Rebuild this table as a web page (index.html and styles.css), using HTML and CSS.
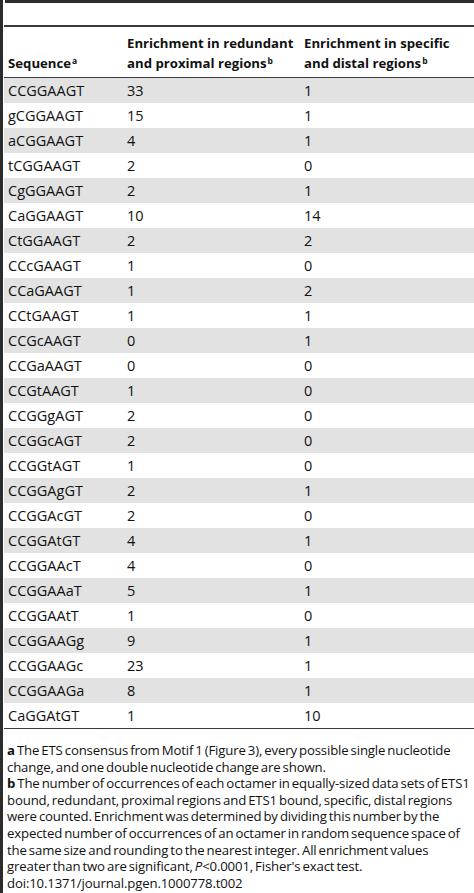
FILE: index.html
```html
<!DOCTYPE html>
<html>
<head>
<meta charset="utf-8">
<link rel="stylesheet" href="styles.css">
</head>
<body>
<div class="page">
  <div class="topbar"></div>
  <table class="data">
    <thead>
      <tr>
        <th class="c1">Sequence<sup>a</sup></th>
        <th class="c2">Enrichment in redundant and proximal regions<sup>b</sup></th>
        <th class="c3">Enrichment in specific and distal regions<sup>b</sup></th>
      </tr>
    </thead>
    <tbody>
      <tr><td>CCGGAAGT</td><td>33</td><td>1</td></tr>
      <tr><td>gCGGAAGT</td><td>15</td><td>1</td></tr>
      <tr><td>aCGGAAGT</td><td>4</td><td>1</td></tr>
      <tr><td>tCGGAAGT</td><td>2</td><td>0</td></tr>
      <tr><td>CgGGAAGT</td><td>2</td><td>1</td></tr>
      <tr><td>CaGGAAGT</td><td>10</td><td>14</td></tr>
      <tr><td>CtGGAAGT</td><td>2</td><td>2</td></tr>
      <tr><td>CCcGAAGT</td><td>1</td><td>0</td></tr>
      <tr><td>CCaGAAGT</td><td>1</td><td>2</td></tr>
      <tr><td>CCtGAAGT</td><td>1</td><td>1</td></tr>
      <tr><td>CCGcAAGT</td><td>0</td><td>1</td></tr>
      <tr><td>CCGaAAGT</td><td>0</td><td>0</td></tr>
      <tr><td>CCGtAAGT</td><td>1</td><td>0</td></tr>
      <tr><td>CCGGgAGT</td><td>2</td><td>0</td></tr>
      <tr><td>CCGGcAGT</td><td>2</td><td>0</td></tr>
      <tr><td>CCGGtAGT</td><td>1</td><td>0</td></tr>
      <tr><td>CCGGAgGT</td><td>2</td><td>1</td></tr>
      <tr><td>CCGGAcGT</td><td>2</td><td>0</td></tr>
      <tr><td>CCGGAtGT</td><td>4</td><td>1</td></tr>
      <tr><td>CCGGAAcT</td><td>4</td><td>0</td></tr>
      <tr><td>CCGGAAaT</td><td>5</td><td>1</td></tr>
      <tr><td>CCGGAAtT</td><td>1</td><td>0</td></tr>
      <tr><td>CCGGAAGg</td><td>9</td><td>1</td></tr>
      <tr><td>CCGGAAGc</td><td>23</td><td>1</td></tr>
      <tr><td>CCGGAAGa</td><td>8</td><td>1</td></tr>
      <tr><td>CaGGAtGT</td><td>1</td><td>10</td></tr>
    </tbody>
  </table>
  <div class="notes">
    <p><b>a</b> The ETS consensus from Motif 1 (Figure 3), every possible single nucleotide<br>change, and one double nucleotide change are shown.</p>
    <p><b>b</b> The number of occurrences of each octamer in equally-sized data sets of ETS1<br>bound, redundant, proximal regions and ETS1 bound, specific, distal regions<br>were counted. Enrichment was determined by dividing this number by the<br>expected number of occurrences of an octamer in random sequence space of<br>the same size and rounding to the nearest integer. All enrichment values<br>greater than two are significant, <i>P</i>&lt;0.0001, Fisher's exact test.</p>
    <p>doi:10.1371/journal.pgen.1000778.t002</p>
  </div>
</div>
</body>
</html>
```
FILE: styles.css
```css
html, body {
  margin: 0;
  padding: 0;
  background: #ffffff;
}
.page {
  width: 471px;
  min-height: 893px;
  border-left: 3px solid #2c2c2c;
  font-family: "Open Sans", "DejaVu Sans", sans-serif;
  color: #111111;
  overflow: hidden;
}
.topbar {
  height: 3px;
  margin-left: 2px;
  background: #2c2c2c;
}
.data {
  margin-top: 22px;
  margin-left: 1px;
  width: 470px;
  border-collapse: collapse;
  border-top: 2px solid #3a3a3a;
  border-bottom: 1px solid #3a3a3a;
}
.data th {
  font-weight: 700;
  font-size: 13.2px;
  line-height: 20px;
  text-align: left;
  vertical-align: bottom;
  padding: 6px 0 4px 4px;
  border-bottom: 1px solid #3a3a3a;
  white-space: nowrap;
}
.data th.c1 { width: 115px; }
.data th.c2 { width: 173px; }
.data th.c2, .data th.c3 { white-space: normal; }
.data sup {
  font-size: 8.5px;
  line-height: 8px;
  vertical-align: 4px;
  margin-left: 1px;
}
.data td {
  font-size: 14.5px;
  height: 25px;
  padding: 0 0 0 4px;
  line-height: 25px;
}
.data tbody tr:nth-child(odd) td {
  background: #e2e2e2;
}
.notes {
  margin-top: 13px;
  padding-left: 4px;
  font-size: 13.2px;
  letter-spacing: -0.15px;
  word-spacing: -1.2px;
  line-height: 16.6px;
  white-space: nowrap;
}
.notes p {
  margin: 0;
}
```
